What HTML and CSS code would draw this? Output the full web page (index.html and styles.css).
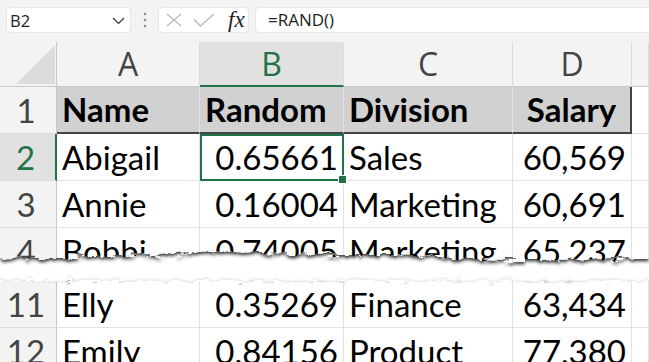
FILE: index.html
```html
<!DOCTYPE html>
<html lang="en">
<head>
<meta charset="utf-8">
<title>Sheet1</title>
<link rel="stylesheet" href="styles.css">
</head>
<body>
<div class="toolbar">
  <div class="namebox">
    <span>B2</span>
    <svg class="chev" width="13" height="8" viewBox="0 0 13 8"><polyline points="1,1 6.5,6.5 12,1" fill="none" stroke="#333" stroke-width="1.2"/></svg>
  </div>
  <svg class="grip" width="4" height="16" viewBox="0 0 4 16"><circle cx="2" cy="2" r="1.3" fill="#8a8a8a"/><circle cx="2" cy="8" r="1.3" fill="#8a8a8a"/><circle cx="2" cy="14" r="1.3" fill="#8a8a8a"/></svg>
  <div class="fxbox">
    <svg class="cancel" width="16" height="14" viewBox="0 0 16 14"><path d="M1 1 L15 13 M15 1 L1 13" stroke="#b9b9b9" stroke-width="1.3" fill="none"/></svg>
    <svg class="enter" width="22" height="14" viewBox="0 0 22 14"><polyline points="1,6.5 7.5,13 21,1" fill="none" stroke="#b9b9b9" stroke-width="1.3"/></svg>
    <span class="fx">fx</span>
  </div>
  <div class="formula">=RAND()</div>
</div>

<div class="sheet">
  <div class="grid upper">
    <div class="corner"><svg width="57" height="44" viewBox="0 0 57 44"><polygon points="55,3 55,42 16,42" fill="#dcdcdc"/></svg></div>
    <div class="ch">A</div>
    <div class="ch sel">B</div>
    <div class="ch">C</div>
    <div class="ch">D</div>
    <div class="ch"></div>

    <div class="rh">1</div>
    <div class="c hd">Name</div>
    <div class="c hd">Random</div>
    <div class="c hd">Division</div>
    <div class="c hd center last">Salary</div>
    <div class="c"></div>

    <div class="rh sel">2</div>
    <div class="c">Abigail</div>
    <div class="c num active">0.65661</div>
    <div class="c">Sales</div>
    <div class="c num">60,569</div>
    <div class="c"></div>

    <div class="rh">3</div>
    <div class="c">Annie</div>
    <div class="c num">0.16004</div>
    <div class="c">Marketing</div>
    <div class="c num">60,691</div>
    <div class="c"></div>

    <div class="rh">4</div>
    <div class="c">Bobbi</div>
    <div class="c num">0.74005</div>
    <div class="c">Marketing</div>
    <div class="c num">65,237</div>
    <div class="c"></div>
  </div>

  <div class="grid lower">
    <div class="rh">11</div>
    <div class="c">Elly</div>
    <div class="c num">0.35269</div>
    <div class="c">Finance</div>
    <div class="c num">63,434</div>
    <div class="c"></div>

    <div class="rh">12</div>
    <div class="c">Emily</div>
    <div class="c num">0.84156</div>
    <div class="c">Product</div>
    <div class="c num">77,380</div>
    <div class="c"></div>
  </div>

  <!-- torn-paper break between row 4 and row 11 -->
  <svg class="tear" width="649" height="48" viewBox="0 0 649 48">
    <defs>
      <filter id="torn" filterUnits="userSpaceOnUse" x="0" y="0" width="649" height="48">
        <feTurbulence type="fractalNoise" baseFrequency="0.08 0.25" numOctaves="4" seed="11" result="noise"/>
        <feDisplacementMap in="SourceGraphic" in2="noise" scale="11" xChannelSelector="R" yChannelSelector="G" result="paper"/>
        <feComponentTransfer in="paper" result="inv">
          <feFuncA type="table" tableValues="1 0"/>
        </feComponentTransfer>
        <feOffset in="inv" dy="2.5" result="invDown"/>
        <feGaussianBlur in="invDown" stdDeviation="1.6" result="blurDown"/>
        <feFlood flood-color="#3c3c3c" flood-opacity="1"/>
        <feComposite in2="blurDown" operator="in" result="shadeDown"/>
        <feComposite in="shadeDown" in2="paper" operator="in" result="edgeTop"/>
        <feOffset in="inv" dy="-1.5" result="invUp"/>
        <feGaussianBlur in="invUp" stdDeviation="1.2" result="blurUp"/>
        <feFlood flood-color="#9a9a9a" flood-opacity="0.4"/>
        <feComposite in2="blurUp" operator="in" result="shadeUp"/>
        <feComposite in="shadeUp" in2="paper" operator="in" result="edgeBottom"/>
        <feMerge>
          <feMergeNode in="paper"/>
          <feMergeNode in="edgeTop"/>
          <feMergeNode in="edgeBottom"/>
        </feMerge>
      </filter>
    </defs>
    <path filter="url(#torn)" fill="#fff"
      d="M-20 18 C 40 19, 100 17, 150 15 S 220 11, 260 13 S 330 15, 380 15 S 460 20, 520 20 S 610 19, 670 18 L 670 41 C 500 42, 300 40, 100 41 L -20 41 Z"/>
  </svg>
</div>
</body>
</html>
```

FILE: styles.css
```css
* { box-sizing: border-box; }

body {
  margin: 0;
  width: 649px;
  height: 362px;
  overflow: hidden;
  background: #fff;
  font-family: "Open Sans", "Noto Sans", sans-serif;
}

/* ---------- formula bar ---------- */
.toolbar {
  height: 42px;
  background: #f3f3f3;
  display: flex;
  align-items: flex-start;
  padding-top: 7px;
  overflow: hidden;
}

.namebox {
  margin-left: 6px;
  width: 125px;
  height: 26px;
  background: #fff;
  border: 1px solid #e6e6e6;
  border-radius: 4px;
  display: flex;
  align-items: center;
  justify-content: space-between;
  padding: 0 5px 0 3px;
  font-size: 16.5px;
  color: #222;
}

.chev { margin-top: 1px; }

.grip {
  margin: 5px 0 0 12px;
}

.fxbox {
  margin-left: 11px;
  width: 91px;
  height: 26px;
  background: #fff;
  border: 1px solid #e6e6e6;
  border-radius: 4px;
  display: flex;
  align-items: center;
  padding-left: 7px;
}

.enter { margin-left: 11px; }

.fx {
  margin-left: 13px;
  font-family: "Liberation Serif", "DejaVu Serif", serif;
  font-style: italic;
  font-size: 23px;
  color: #1e1e1e;
  line-height: 1;
  margin-top: -2px;
}

.formula {
  margin-left: 6px;
  flex: 1;
  margin-right: -8px;
  height: 26px;
  background: #fff;
  border: 1px solid #e6e6e6;
  border-radius: 4px;
  padding-left: 12px;
  font-size: 17px;
  line-height: 24px;
  color: #222;
}

/* ---------- grid ---------- */
.sheet {
  position: relative;
}

.grid {
  display: grid;
  grid-template-columns: 57px 143px 144px 169px 119px 1fr;
}

.upper {
  height: 239px;
  overflow: hidden;
  grid-template-rows: 45px repeat(5, 47px);
}

.lower {
  grid-template-rows: repeat(2, 47px);
}

.corner {
  background: #f3f3f3;
  border-right: 1px solid #c8c8c8;
  border-bottom: 1px solid #c8c8c8;
}
.corner svg { display: block; }

.ch {
  background: #f3f3f3;
  border-right: 1px solid #dcdcdc;
  border-bottom: 1px solid #c8c8c8;
  text-align: center;
  font-size: 32px;
  line-height: 44px;
  color: #444;
}

.ch.sel {
  background: #e1e1e1;
  color: #217346;
  border-bottom: 2px solid #217346;
}

.rh {
  background: #f3f3f3;
  border-right: 1px solid #c8c8c8;
  border-bottom: 1px solid #dedede;
  text-align: center;
  padding-right: 4px;
  font-family: Lato, "Open Sans", sans-serif;
  font-size: 33px;
  line-height: 46px;
  color: #444;
}

.rh.sel {
  background: #e1e1e1;
  color: #217346;
  border-right: 2px solid #217346;
}

.c {
  border-right: 1px solid #e2e2e2;
  border-bottom: 1px solid #e2e2e2;
  padding: 0 5px;
  font-family: Lato, "Open Sans", sans-serif;
  font-size: 33px;
  line-height: 46px;
  color: #000;
  white-space: nowrap;
}

.num { text-align: right; }
.center { text-align: center; }

.hd {
  background: #d1d1d1;
  font-weight: 700;
  border-bottom: 2px solid #444;
  line-height: 45px;
}
.hd.last { border-right: 2px solid #444; }

.active {
  position: relative;
  outline: 2px solid #217346;
  outline-offset: -2px;
}
.active::after {
  content: "";
  position: absolute;
  right: -4px;
  bottom: -4px;
  width: 7px;
  height: 7px;
  background: #217346;
  border: 1px solid #fff;
}

/* ---------- page break overlay ---------- */
.tear {
  position: absolute;
  left: 0;
  top: 198px;
  display: block;
}
```
